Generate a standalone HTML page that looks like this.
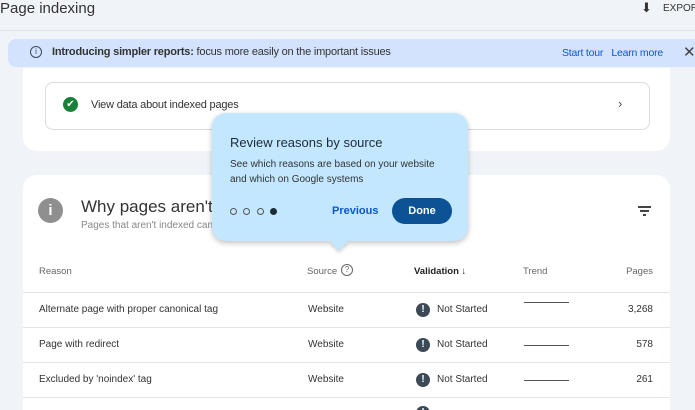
<html><head><style>
html,body{margin:0;width:695px;height:410px;overflow:hidden}
body{background:#f0f4f9;font-family:"Liberation Sans",Arial,sans-serif;position:relative;color:#1f1f1f}
.a{position:absolute}
.sm{font-size:11px;letter-spacing:-0.2px}
.row{position:absolute;left:23px;width:647px;height:35px;border-top:1px solid #e3e3e3;background:#fff;overflow:hidden}
.row span{position:absolute;top:11px;font-size:10px;color:#333}
.row .r{right:17px}
.ex{position:absolute;left:393px;top:10px;width:14px;height:14px;border-radius:50%;background:#3c4a55;color:#fff;font-size:10px;font-weight:bold;text-align:center;line-height:14px}
</style></head><body>
<div class="a" style="left:0;top:0;font-size:15px;color:#333">Page indexing</div>
<div class="a" style="left:641px;top:0;font-size:13px;color:#333">⬇</div>
<div class="a" style="left:663px;top:3px;font-size:10px;color:#333">EXPOR</div>
<div class="a" style="left:0;top:30px;width:695px;height:1px;background:#e3e6ea"></div>
<div class="a" style="left:8px;top:39px;width:687px;height:28px;background:#d3e3fd;border-radius:8px 0 0 8px"></div>
<div class="a" style="left:30px;top:46px;width:10px;height:10px;border:1.3px solid #3b4a5a;border-radius:50%;font-size:8px;text-align:center;line-height:10px;color:#3b4a5a">i</div>
<div class="a sm" style="left:52px;top:46px;color:#333"><b style="font-weight:600">Introducing simpler reports:</b> focus more easily on the important issues</div>
<div class="a sm" style="left:562px;top:47px;color:#0b57d0;font-size:10.5px">Start tour&nbsp;&nbsp; Learn more</div>
<div class="a" style="left:683px;top:43px;font-size:15px;color:#444">✕</div>
<div class="a" style="left:23px;top:68px;width:647px;height:83px;background:#fff;border-radius:0 0 14px 14px"></div>
<div class="a" style="left:45px;top:82px;width:603px;height:46px;border:1px solid #dadce0;border-radius:8px;background:#fff"></div>
<div class="a" style="left:63px;top:97px;width:15px;height:15px;border-radius:50%;background:#188038;color:#fff;font-size:10px;text-align:center;line-height:15px">✔</div>
<div class="a sm" style="left:91px;top:99px;color:#333">View data about indexed pages</div>
<div class="a" style="left:618px;top:96px;font-size:13px;color:#555">›</div>
<div class="a" style="left:23px;top:175px;width:647px;height:235px;background:#fff;border-radius:14px 14px 0 0"></div>
<div class="a" style="left:38px;top:198px;width:25px;height:25px;border-radius:50%;background:#8f8f8f;color:#fff;font-weight:bold;font-size:15px;text-align:center;line-height:25px">i</div>
<div class="a" style="left:81px;top:197px;font-size:17px;color:#333">Why pages aren't indexed</div>
<div class="a" style="left:81px;top:220px;font-size:10px;color:#888">Pages that aren't indexed can't be served</div>
<div class="a" style="left:638px;top:206px;width:13px;height:1.5px;background:#444"></div>
<div class="a" style="left:640px;top:210px;width:9px;height:1.5px;background:#444"></div>
<div class="a" style="left:643px;top:214px;width:3px;height:1.5px;background:#444"></div>
<div class="a" style="left:39px;top:266px;font-size:9.5px;color:#666">Reason</div>
<div class="a" style="left:307px;top:266px;font-size:9.5px;color:#666">Source</div>
<div class="a" style="left:341px;top:264px;width:10px;height:10px;border:1px solid #666;border-radius:50%;font-size:8px;text-align:center;line-height:10px;color:#666">?</div>
<div class="a" style="left:414px;top:266px;font-size:9.5px;color:#222;font-weight:600">Validation ↓</div>
<div class="a" style="left:523px;top:266px;font-size:9.5px;color:#666">Trend</div>
<div class="a" style="right:42px;top:266px;font-size:9.5px;color:#666">Pages</div>
<div class="row" style="top:292px"><span style="left:16px">Alternate page with proper canonical tag</span><span style="left:285px">Website</span><div class="ex">!</div><span style="left:414px">Not Started</span><div class="a" style="left:501px;top:9px;width:45px;height:1px;background:#555"></div><span class="r">3,268</span></div>
<div class="row" style="top:327px"><span style="left:16px">Page with redirect</span><span style="left:285px">Website</span><div class="ex">!</div><span style="left:414px">Not Started</span><div class="a" style="left:501px;top:17px;width:45px;height:1px;background:#555"></div><span class="r">578</span></div>
<div class="row" style="top:362px"><span style="left:16px">Excluded by 'noindex' tag</span><span style="left:285px">Website</span><div class="ex">!</div><span style="left:414px">Not Started</span><div class="a" style="left:501px;top:17px;width:45px;height:1px;background:#555"></div><span class="r">261</span></div>
<div class="row" style="top:397px;height:12px"><div class="ex" style="top:8px">!</div></div>
<div class="a" style="left:212px;top:113px;width:256px;height:128px;background:#c2e7ff;border-radius:14px;box-shadow:0 2px 6px rgba(0,0,0,.25)"></div>
<div class="a" style="left:333px;top:236px;width:12px;height:12px;background:#c2e7ff;transform:rotate(45deg);box-shadow:2px 2px 3px rgba(0,0,0,.15)"></div>
<div class="a" style="left:230px;top:135px;font-size:13px;color:#1f2a37">Review reasons by source</div>
<div class="a" style="left:230px;top:157px;font-size:10px;line-height:15px;color:#333">See which reasons are based on your website<br>and which on Google systems</div>
<div class="a" style="left:230px;top:208px;width:5px;height:5px;border:1px solid #555;border-radius:50%"></div>
<div class="a" style="left:243px;top:208px;width:5px;height:5px;border:1px solid #555;border-radius:50%"></div>
<div class="a" style="left:257px;top:208px;width:5px;height:5px;border:1px solid #555;border-radius:50%"></div>
<div class="a" style="left:270px;top:208px;width:7px;height:7px;background:#1f2a37;border-radius:50%"></div>
<div class="a" style="left:332px;top:205px;font-size:11px;color:#0b57d0;font-weight:600">Previous</div>
<div class="a" style="left:392px;top:198px;width:60px;height:26px;border-radius:13px;background:#0b5394;color:#fff;font-size:11px;font-weight:600;text-align:center;line-height:26px">Done</div>
</body></html>
